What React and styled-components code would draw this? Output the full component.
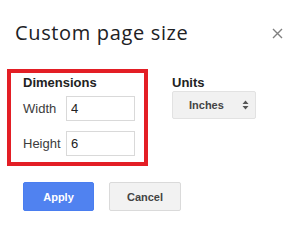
import { createGlobalStyle, styled } from "styled-components";

const Global = createGlobalStyle`
  html, body {
    margin: 0;
    padding: 0;
    background: #ffffff;
  }
  body {
    font-family: "Liberation Sans", Arial, sans-serif;
  }
`;

const Dialog = styled.div`
  width: 300px;
  height: 230px;
  padding-top: 21px;
  box-sizing: border-box;
  background: #fff;
`;

const Header = styled.div`
  display: flex;
  align-items: center;
  justify-content: space-between;
  height: 24px;
  padding: 0 17px 0 15px;
`;

const Title = styled.h1`
  margin: 0;
  font-family: "Open Sans", sans-serif;
  font-weight: 400;
  font-size: 20px;
  letter-spacing: 0.65px;
  line-height: 24px;
  color: #202124;
`;

const Close = styled.button`
  border: 0;
  background: none;
  padding: 0;
  width: 11px;
  height: 11px;
  display: flex;
  cursor: pointer;
`;

const Body = styled.div`
  display: flex;
  align-items: flex-start;
  margin-top: 24px;
  padding-left: 7px;
`;

const Highlight = styled.div`
  width: 141px;
  box-sizing: border-box;
  border: 4px solid #e31e25;
  padding: 2px 9px 6px 12px;
`;

const Heading = styled.div`
  font-size: 13px;
  font-weight: 700;
  line-height: 15px;
  color: #222;
`;

const Fields = styled.div`
  display: grid;
  grid-template-columns: 43px 69px;
  row-gap: 10px;
  align-items: center;
  margin-top: 6px;
`;

const Label = styled.label`
  font-size: 13px;
  color: #3c3c3c;
`;

const Input = styled.input`
  width: 69px;
  height: 25px;
  box-sizing: border-box;
  border: 1px solid #d9d9d9;
  padding: 0 4px;
  font-family: "Liberation Sans", Arial, sans-serif;
  font-size: 13px;
  color: #222;
  outline: none;
`;

const UnitsCol = styled.div`
  margin-left: 24px;
  padding-top: 6px;
`;

const Select = styled.div`
  margin-top: 1px;
  width: 84px;
  height: 28px;
  box-sizing: border-box;
  display: flex;
  align-items: center;
  justify-content: space-between;
  padding: 0 6px 0 16px;
  background: #f1f1f1;
  border: 1px solid #e2e2e2;
  border-radius: 2px;
  font-size: 11px;
  font-weight: 700;
  color: #444;
`;

const Actions = styled.div`
  display: flex;
  gap: 15px;
  margin-top: 16px;
  padding-left: 23px;
`;

const Button = styled.button`
  width: ${(p) => (p.$primary ? "71px" : "72px")};
  height: 29px;
  box-sizing: border-box;
  border-radius: 2px;
  border: 1px solid ${(p) => (p.$primary ? "#4a7ef0" : "#dadada")};
  background: ${(p) => (p.$primary ? "#5082f0" : "#f2f2f2")};
  color: ${(p) => (p.$primary ? "#fff" : "#444")};
  font-family: "Liberation Sans", Arial, sans-serif;
  font-size: 11px;
  font-weight: 700;
  padding: 0;
`;

export default function App() {
  return (
    <>
      <Global />
      <Dialog>
        <Header>
          <Title>Custom page size</Title>
          <Close aria-label="Close">
            <svg width="11" height="11" viewBox="0 0 11 11">
              <path d="M1 1L10 10M10 1L1 10" stroke="#808080" strokeWidth="1.4" />
            </svg>
          </Close>
        </Header>
        <Body>
          <Highlight>
            <Heading>Dimensions</Heading>
            <Fields>
              <Label>Width</Label>
              <Input defaultValue="4" />
              <Label>Height</Label>
              <Input defaultValue="6" />
            </Fields>
          </Highlight>
          <UnitsCol>
            <Heading>Units</Heading>
            <Select>
              <span>Inches</span>
              <svg width="7" height="12" viewBox="0 0 7 12">
                <path d="M0.5 5L3.5 1.5L6.5 5Z M0.5 7L3.5 10.5L6.5 7Z" fill="#555" />
              </svg>
            </Select>
          </UnitsCol>
        </Body>
        <Actions>
          <Button $primary>Apply</Button>
          <Button>Cancel</Button>
        </Actions>
      </Dialog>
    </>
  );
}
